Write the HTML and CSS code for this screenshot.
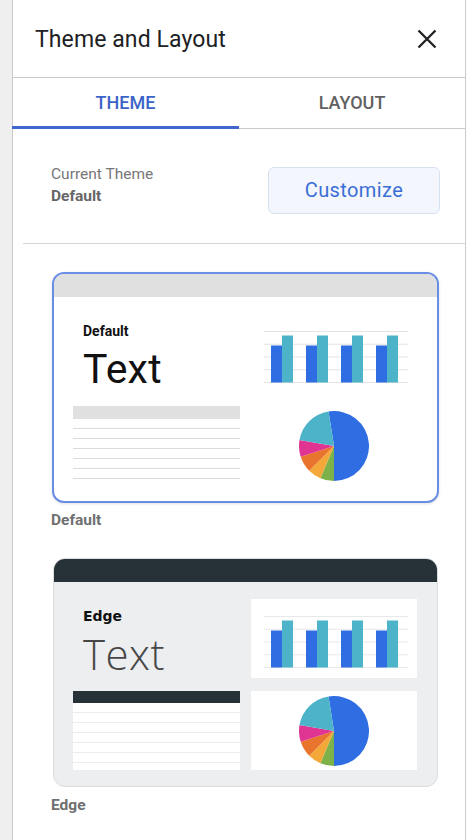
FILE: index.html
```html
<!DOCTYPE html>
<html lang="en">
<head>
<meta charset="utf-8">
<title>Theme and Layout</title>
<link rel="stylesheet" href="styles.css">
</head>
<body>
<div class="page">
  <div class="gutter"></div>
  <div class="panel">
    <header class="header">
      <h1 class="title">Theme and Layout</h1>
      <button class="close" aria-label="Close">
        <svg width="20" height="20" viewBox="0 0 20 20"><path d="M1.5 1.5L18.5 18.5M18.5 1.5L1.5 18.5" stroke="#202124" stroke-width="2.3" fill="none"/></svg>
      </button>
    </header>
    <nav class="tabs">
      <div class="tab active">THEME</div>
      <div class="tab">LAYOUT</div>
    </nav>
    <section class="current">
      <div class="current-text">
        <div class="current-label">Current Theme</div>
        <div class="current-name">Default</div>
      </div>
      <button class="customize">Customize</button>
    </section>
    <div class="divider"></div>
    <section class="themes">
      <div class="card card-default">
        <div class="card-top"></div>
        <div class="card-body">
          <div class="cell cell-text">
            <div class="t-name">Default</div>
            <div class="t-big">Text</div>
          </div>
          <div class="cell cell-bars">
            <svg width="144" height="52" viewBox="0 0 144 52">
              <g stroke="#e3e3e3" stroke-width="1"><line x1="0" y1="0.5" x2="144" y2="0.5"/><line x1="0" y1="13.25" x2="144" y2="13.25"/><line x1="0" y1="26" x2="144" y2="26"/><line x1="0" y1="38.75" x2="144" y2="38.75"/><line x1="0" y1="51.5" x2="144" y2="51.5"/></g>
              <g fill="#2f6de3"><rect x="7" y="14.5" width="11" height="37"/><rect x="42" y="14.5" width="11" height="37"/><rect x="77" y="14.5" width="11" height="37"/><rect x="112" y="14.5" width="11" height="37"/></g>
              <g fill="#4cb3c9"><rect x="18" y="4.5" width="11" height="47"/><rect x="53" y="4.5" width="11" height="47"/><rect x="88" y="4.5" width="11" height="47"/><rect x="123" y="4.5" width="11" height="47"/></g>
            </svg>
          </div>
          <div class="cell table">
            <div class="t-head"></div>
            <div class="t-row"></div><div class="t-row"></div><div class="t-row"></div><div class="t-row"></div><div class="t-row"></div><div class="t-row"></div>
          </div>
          <div class="cell cell-pie">
            <svg width="70" height="70" viewBox="0 0 70 70">
              <path d="M35 35L29.53 0.43A35 35 0 1 1 35 70Z" fill="#2f6de3"/>
              <path d="M35 35L35 70A35 35 0 0 1 21.33 67.22Z" fill="#7db24b"/>
              <path d="M35 35L21.33 67.22A35 35 0 0 1 10.25 59.75Z" fill="#f4a83a"/>
              <path d="M35 35L10.25 59.75A35 35 0 0 1 1.71 45.82Z" fill="#e8742d"/>
              <path d="M35 35L1.71 45.82A35 35 0 0 1 0.53 28.92Z" fill="#df3491"/>
              <path d="M35 35L0.53 28.92A35 35 0 0 1 29.53 0.43Z" fill="#4cb3c9"/>
            </svg>
          </div>
        </div>
      </div>
      <div class="card-label">Default</div>

      <div class="card card-edge">
        <div class="card-top"></div>
        <div class="card-body">
          <div class="cell cell-text">
            <div class="t-name">Edge</div>
            <div class="t-big">Text</div>
          </div>
          <div class="cell cell-bars">
            <svg width="144" height="52" viewBox="0 0 144 52">
              <g stroke="#e8e8e8" stroke-width="1"><line x1="0" y1="0.5" x2="144" y2="0.5"/><line x1="0" y1="13.25" x2="144" y2="13.25"/><line x1="0" y1="26" x2="144" y2="26"/><line x1="0" y1="38.75" x2="144" y2="38.75"/><line x1="0" y1="51.5" x2="144" y2="51.5"/></g>
              <g fill="#2f6de3"><rect x="7" y="14.5" width="11" height="37"/><rect x="42" y="14.5" width="11" height="37"/><rect x="77" y="14.5" width="11" height="37"/><rect x="112" y="14.5" width="11" height="37"/></g>
              <g fill="#4cb3c9"><rect x="18" y="4.5" width="11" height="47"/><rect x="53" y="4.5" width="11" height="47"/><rect x="88" y="4.5" width="11" height="47"/><rect x="123" y="4.5" width="11" height="47"/></g>
            </svg>
          </div>
          <div class="cell table">
            <div class="t-head"></div>
            <div class="t-row"></div><div class="t-row"></div><div class="t-row"></div><div class="t-row"></div><div class="t-row"></div><div class="t-row"></div>
          </div>
          <div class="cell cell-pie">
            <svg width="70" height="70" viewBox="0 0 70 70">
              <path d="M35 35L29.53 0.43A35 35 0 1 1 35 70Z" fill="#2f6de3"/>
              <path d="M35 35L35 70A35 35 0 0 1 21.33 67.22Z" fill="#7db24b"/>
              <path d="M35 35L21.33 67.22A35 35 0 0 1 10.25 59.75Z" fill="#f4a83a"/>
              <path d="M35 35L10.25 59.75A35 35 0 0 1 1.71 45.82Z" fill="#e8742d"/>
              <path d="M35 35L1.71 45.82A35 35 0 0 1 0.53 28.92Z" fill="#df3491"/>
              <path d="M35 35L0.53 28.92A35 35 0 0 1 29.53 0.43Z" fill="#4cb3c9"/>
            </svg>
          </div>
        </div>
      </div>
      <div class="card-label card-label-edge">Edge</div>
    </section>
  </div>
  <div class="rest"></div>
</div>
</body>
</html>
```
FILE: styles.css
```css
* { box-sizing: border-box; }
html, body { margin: 0; padding: 0; background: #fff; }
body { font-family: Roboto, "Liberation Sans", sans-serif; color: #202124; }

.page { display: flex; min-height: 840px; width: 100%; }
.gutter { width: 12px; background: #efefef; flex: none; }
.panel {
  width: 454px;
  flex: none;
  border-left: 1px solid #cbcbcb;
  border-right: 1px solid #cbcbcb;
  min-height: 840px;
}
.rest { flex: 1; background: #fff; }

.header {
  height: 78px;
  border-bottom: 1px solid #cbcbcb;
  display: flex;
  align-items: center;
  justify-content: space-between;
  padding: 0 28px 0 22px;
}
.title {
  margin: 0;
  font-size: 23px;
  font-weight: 400;
  color: #202124;
  letter-spacing: 0.1px;
  padding-top: 1px;
}
.close {
  border: 0;
  background: none;
  padding: 0;
  width: 20px;
  height: 20px;
  display: flex;
}

.tabs {
  display: grid;
  grid-template-columns: 1fr 1fr;
  height: 51px;
  border-bottom: 1px solid #cbcbcb;
}
.tab {
  display: flex;
  align-items: center;
  justify-content: center;
  font-size: 18px;
  font-weight: 500;
  color: #616161;
  border-bottom: 3px solid transparent;
  margin-bottom: -1px;
  padding-top: 0;
}
.tab.active {
  color: #3c63c8;
  border-bottom-color: #3f67cf;
  margin-left: -1px;
}

.current {
  display: flex;
  align-items: flex-start;
  justify-content: space-between;
  padding: 38px 25px 29px 38px;
}
.current-text { padding-top: 0; margin-top: -3px; }
.current-label { font-size: 15.5px; line-height: 20px; color: #777; }
.current-name { font-size: 15.5px; line-height: 20px; font-weight: 700; color: #666; margin-top: 2px; }
.customize {
  width: 172px;
  height: 47px;
  background: #f3f7fd;
  border: 1.5px solid #d6e1f2;
  border-radius: 6px;
  color: #3a6ed6;
  font-family: Roboto, "Liberation Sans", sans-serif;
  font-size: 20px;
  letter-spacing: 0.4px;
  font-weight: 400;
  padding: 0 0 2px;
}
.divider { height: 1px; background: #d6d6d6; margin-left: 10px; }

.themes { padding: 28px 0 0 0; }
.card {
  margin-left: 39px;
  width: 387px;
  border-radius: 12px;
  overflow: hidden;
}
.card-default {
  border: 2px solid #6a8ee6;
  background: #fff;
  box-shadow: 0 1px 3px rgba(0,0,0,0.12);
}
.card-edge {
  margin-left: 40px;
  width: 385px;
  border: 1px solid #dadcde;
  background: #edeef0;
}
.card-top { height: 23px; background: #e0e0e0; }
.card-edge .card-top { background: #263238; }
.card-body {
  display: grid;
  grid-template-columns: 167px 166px;
  grid-template-rows: 79px 79px;
  column-gap: 11px;
  row-gap: 13px;
  padding: 17px 20px 16px 19px;
}
.cell-text { padding: 9px 0 0 10px; }
.t-name { font-size: 14px; line-height: 16px; font-weight: 700; color: #111; }
.t-big { font-size: 41px; line-height: 44px; margin-top: 8px; color: #111; letter-spacing: 0.2px; }
.card-edge .t-name { font-family: "DejaVu Sans", sans-serif; font-size: 14px; color: #111; }
.card-edge .t-big { font-family: "Open Sans", Lato, sans-serif; font-weight: 300; font-size: 42px; color: #474747; letter-spacing: 0.5px; }

.cell-bars { padding: 17px 0 0 13px; }
.cell-bars svg { display: block; }
.card-edge .cell-bars, .card-edge .cell-pie, .card-edge .table { background: #fff; }
.cell-pie { display: flex; align-items: center; justify-content: center; }
.cell-pie svg { display: block; }

.table { display: flex; flex-direction: column; }
.t-head { height: 13px; background: #e0e0e0; }
.t-row { height: 10px; border-bottom: 1px solid #dcdcdc; }
.card-edge .t-head { height: 12px; background: #263238; }
.card-edge .t-row { border-bottom-color: #ededed; }

.card-label {
  margin: 8px 0 29px 38px;
  font-size: 15.5px;
  line-height: 18px;
  font-weight: 700;
  color: #707070;
}
.card-label-edge { margin-top: 9px; }
```
